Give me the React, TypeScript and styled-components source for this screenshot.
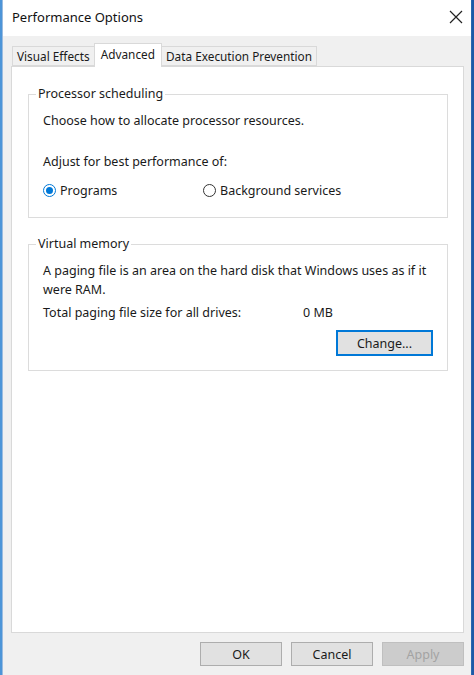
import styled, { createGlobalStyle } from "styled-components";

const GlobalStyle = createGlobalStyle`
  html, body {
    margin: 0;
    padding: 0;
  }
  body {
    font-family: "Noto Sans", "Open Sans", sans-serif;
    font-size: 12.5px;
    color: #1a1a1a;
  }
`;

const Desktop = styled.div`
  width: 474px;
  height: 675px;
  display: flex;
  background: linear-gradient(90deg, #4d95d8 0, #4d95d8 3px, #1d5aa6 3px);
  overflow: hidden;
`;

const Window = styled.div`
  margin-left: 2px;
  width: 468px;
  height: 675px;
  display: flex;
  flex-direction: column;
  background: #f0f0f0;
  border-left: 1px solid #9bbce0;
  border-right: 1px solid #2a67b0;
`;

const TitleBar = styled.div`
  flex-shrink: 0;
  height: 36px;
  box-sizing: border-box;
  display: flex;
  align-items: center;
  justify-content: space-between;
  padding: 0 7px 2px 9px;
  background: #ffffff;
`;

const Title = styled.span`
  font-size: 13px;
  color: #111;
`;

const Close = styled.span`
  display: flex;
  width: 16px;
  height: 16px;
`;

const Body = styled.div`
  flex: 1;
  display: flex;
  flex-direction: column;
  padding: 7px 7px 0 8px;
`;

const TabRow = styled.div`
  flex-shrink: 0;
  display: flex;
  align-items: flex-end;
  height: 23px;
  padding-left: 1px;
`;

const Tab = styled.div<{ $active?: boolean }>`
  height: ${(p) => (p.$active ? "24px" : "20px")};
  box-sizing: border-box;
  display: flex;
  align-items: center;
  padding: 0 ${(p) => (p.$active ? "6px" : "4px")};
  padding-bottom: ${(p) => (p.$active ? "3px" : "0")};
  margin-bottom: ${(p) => (p.$active ? "-1px" : "0")};
  margin-left: ${(p) => (p.$active ? "-1px" : "0")};
  margin-right: ${(p) => (p.$active ? "-1px" : "0")};
  background: ${(p) => (p.$active ? "#ffffff" : "#f0f0f0")};
  border: 1px solid #d9d9d9;
  border-bottom: ${(p) => (p.$active ? "none" : "1px solid #d9d9d9")};
  position: relative;
  z-index: ${(p) => (p.$active ? 1 : 0)};
  font-size: 11.8px;
`;

const Panel = styled.div`
  flex-shrink: 0;
  height: 567px;
  box-sizing: border-box;
  background: #ffffff;
  border: 1px solid #d9d9d9;
  display: flex;
  flex-direction: column;
  gap: 19px;
  padding: 20px 15px 0 16px;
`;

const Group = styled.fieldset<{ $height: number }>`
  margin: 0;
  height: ${(p) => p.$height}px;
  box-sizing: border-box;
  border: 1px solid #dcdcdc;
  padding: 0 14px;
  display: flex;
  flex-direction: column;
`;

const Legend = styled.legend`
  padding: 0 2px;
  margin-left: -7px;
  font-size: 12.5px;
  line-height: 14px;
`;

const Text = styled.div<{ $top?: number }>`
  margin-top: ${(p) => p.$top ?? 0}px;
  line-height: 19px;
`;

const RadioRow = styled.div`
  display: flex;
  margin-top: 11px;
`;

const RadioLabel = styled.label<{ $width?: number }>`
  display: flex;
  align-items: center;
  gap: 4px;
  width: ${(p) => (p.$width ? `${p.$width}px` : "auto")};
`;

const RadioCircle = styled.span<{ $checked?: boolean }>`
  width: 13px;
  height: 13px;
  box-sizing: border-box;
  border-radius: 50%;
  border: 1px solid ${(p) => (p.$checked ? "#0078d7" : "#333")};
  display: flex;
  align-items: center;
  justify-content: center;
  &::after {
    content: "";
    width: 7px;
    height: 7px;
    border-radius: 50%;
    background: ${(p) => (p.$checked ? "#0078d7" : "transparent")};
  }
`;

const SizeRow = styled.div`
  display: flex;
  margin-top: 4px;
  line-height: 19px;
`;

const SizeLabel = styled.span`
  width: 260px;
`;

const ButtonRow = styled.div<{ $pad?: string }>`
  display: flex;
  justify-content: flex-end;
  gap: 9px;
  padding: ${(p) => p.$pad ?? "0"};
`;

const Button = styled.button<{ $focused?: boolean; $disabled?: boolean }>`
  width: ${(p) => (p.$focused ? "97px" : "82px")};
  height: ${(p) => (p.$focused ? "26px" : "24px")};
  font-family: inherit;
  font-size: 12.5px;
  color: ${(p) => (p.$disabled ? "#a3a3a3" : "#1a1a1a")};
  background: ${(p) => (p.$disabled ? "#cccccc" : "#e1e1e1")};
  border: ${(p) =>
    p.$focused ? "2px solid #0078d7" : p.$disabled ? "1px solid #bfbfbf" : "1px solid #adadad"};
  padding: 0;
`;

export default function App() {
  return (
    <>
      <GlobalStyle />
      <Desktop>
        <Window>
          <TitleBar>
            <Title>Performance Options</Title>
            <Close>
              <svg width="16" height="16" viewBox="0 0 16 16">
                <path d="M2 2 L14 14 M14 2 L2 14" stroke="#222" strokeWidth="1.2" />
              </svg>
            </Close>
          </TitleBar>
          <Body>
            <TabRow>
              <Tab>Visual Effects</Tab>
              <Tab $active>Advanced</Tab>
              <Tab>Data Execution Prevention</Tab>
            </TabRow>
            <Panel>
              <Group $height={131}>
                <Legend>Processor scheduling</Legend>
                <Text $top={10}>Choose how to allocate processor resources.</Text>
                <Text $top={22}>Adjust for best performance of:</Text>
                <RadioRow>
                  <RadioLabel $width={160}>
                    <RadioCircle $checked />
                    Programs
                  </RadioLabel>
                  <RadioLabel>
                    <RadioCircle />
                    Background services
                  </RadioLabel>
                </RadioRow>
              </Group>
              <Group $height={134}>
                <Legend>Virtual memory</Legend>
                <Text $top={10}>
                  A paging file is an area on the hard disk that Windows uses as if it were RAM.
                </Text>
                <SizeRow>
                  <SizeLabel>Total paging file size for all drives:</SizeLabel>
                  <span>0 MB</span>
                </SizeRow>
                <ButtonRow $pad="8px 0 0 0">
                  <Button $focused>Change...</Button>
                </ButtonRow>
              </Group>
            </Panel>
            <ButtonRow $pad="9px 0 0 0">
              <Button>OK</Button>
              <Button>Cancel</Button>
              <Button $disabled>Apply</Button>
            </ButtonRow>
          </Body>
        </Window>
      </Desktop>
    </>
  );
}
